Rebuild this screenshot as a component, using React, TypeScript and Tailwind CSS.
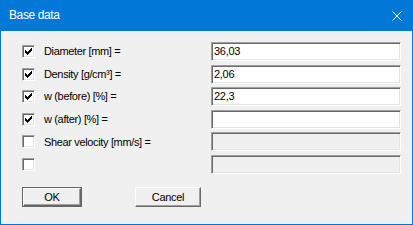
import type { ReactNode } from 'react'

const font = { fontFamily: '"Liberation Sans", Arial, sans-serif' }

type Row = { label: string; value: string; checked: boolean; enabled: boolean }

const rows: Row[] = [
  { label: 'Diameter [mm] =', value: '36,03', checked: true, enabled: true },
  { label: 'Density [g/cm³] =', value: '2,06', checked: true, enabled: true },
  { label: 'w (before) [%] =', value: '22,3', checked: true, enabled: true },
  { label: 'w (after) [%] =', value: '', checked: true, enabled: true },
  { label: 'Shear velocity [mm/s] =', value: '', checked: false, enabled: false },
  { label: '', value: '', checked: false, enabled: false },
]

function Checkbox({ checked }: { checked: boolean }) {
  return (
    <div className="box-border h-[13px] w-[13px] shrink-0 border border-t-[#a0a0a0] border-l-[#a0a0a0] border-r-white border-b-white bg-white shadow-[inset_1px_1px_0_#696969,inset_-1px_-1px_0_#e3e3e3]">
      {checked && (
        <svg width="11" height="11" viewBox="0 0 11 11" shapeRendering="crispEdges" className="block">
          {[2, 3, 4, 3, 2, 1, 0].map((y, i) => (
            <rect key={i} x={2 + i} y={2 + y} width="1" height="3" fill="#000" />
          ))}
        </svg>
      )}
    </div>
  )
}

function Field({ value, enabled }: { value: string; enabled: boolean }) {
  return (
    <div
      className={`box-border flex h-[19px] w-[190px] items-center border border-t-[#a0a0a0] border-l-[#a0a0a0] border-r-white border-b-white pl-[2px] text-[11px] tracking-[-0.3px] text-black shadow-[inset_1px_1px_0_#696969,inset_-1px_-1px_0_#e3e3e3] ${
        enabled ? 'bg-white' : 'bg-[#f0f0f0]'
      }`}
    >
      {value}
    </div>
  )
}

function Button({ children, isDefault, width }: { children: ReactNode; isDefault?: boolean; width: string }) {
  const face = (
    <div className="box-border flex h-full w-full items-center justify-center border border-t-white border-l-white border-r-[#696969] border-b-[#696969] bg-[#f0f0f0] text-[11px] tracking-[-0.3px] text-black shadow-[inset_-1px_-1px_0_#a0a0a0]">
      {children}
    </div>
  )
  return (
    <div className={`box-border h-[20px] ${width} ${isDefault ? 'border border-[#646464]' : ''}`}>{face}</div>
  )
}

export default function App() {
  return (
    <div className="box-border flex h-[225px] w-[413px] flex-col bg-[#0078d7]" style={font}>
      <div className="flex h-[31px] shrink-0 items-center justify-between pl-[9px] pr-[11px] text-white">
        <span className="pb-[1px] text-[12px] tracking-[-0.4px]">Base data</span>
        <svg width="10" height="10" viewBox="0 0 10 10" className="block">
          <path d="M0.5 0.5 L9.5 9.5 M9.5 0.5 L0.5 9.5" stroke="#fff" strokeWidth="1" />
        </svg>
      </div>
      <div className="mx-[1px] mb-[1px] flex flex-1 flex-col bg-[#f0f0f0] pl-[21px] pt-[11px]">
        <div className="flex flex-col gap-[3.6px]">
          {rows.map((r, i) => (
            <div key={i} className="flex h-[19px] items-center">
              <Checkbox checked={r.checked} />
              <span className="ml-[9px] w-[167px] text-[11px] tracking-[-0.35px] text-black">{r.label}</span>
              <Field value={r.value} enabled={r.enabled} />
            </div>
          ))}
        </div>
        <div className="mt-[13px] flex">
          <Button isDefault width="w-[60px]">
            OK
          </Button>
          <div className="w-[53px]" />
          <Button width="w-[66px]">Cancel</Button>
        </div>
      </div>
    </div>
  )
}
